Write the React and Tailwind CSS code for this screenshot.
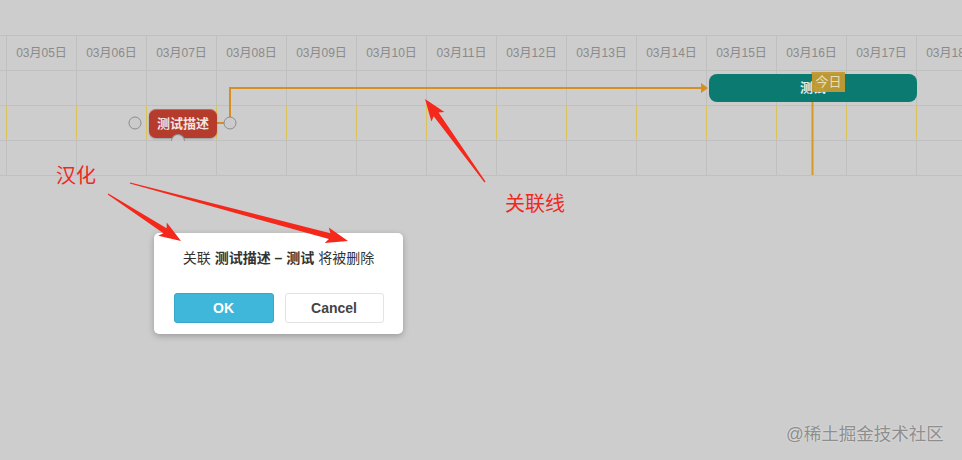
import React from 'react';

const dates = ['03月04日', '03月05日', '03月06日', '03月07日', '03月08日', '03月09日', '03月10日', '03月11日', '03月12日', '03月13日', '03月14日', '03月15日', '03月16日', '03月17日', '03月18日'];

// tapered screenshot-style annotation arrow
const arrowPoints = (x1, y1, x2, y2) => {
    const dx = x2 - x1;
    const dy = y2 - y1;
    const len = Math.hypot(dx, dy);
    const ux = dx / len;
    const uy = dy / len;
    const nx = -uy;
    const ny = ux;
    const headLen = 19;
    const headW = 8;
    const neckW = 3;
    const bx = x2 - ux * headLen;
    const by = y2 - uy * headLen;
    const pts = [
        [x1 + nx * 0.6, y1 + ny * 0.6],
        [bx + nx * neckW, by + ny * neckW],
        [bx - ux * 3 + nx * headW, by - uy * 3 + ny * headW],
        [x2, y2],
        [bx - ux * 3 - nx * headW, by - uy * 3 - ny * headW],
        [bx - nx * neckW, by - ny * neckW],
        [x1 - nx * 0.6, y1 - ny * 0.6],
    ];
    return pts.map(p => p[0].toFixed(1) + ',' + p[1].toFixed(1)).join(' ');
};

const GanttGrid = () => (
    <div className="pt-[35px] overflow-hidden">
        <div className="flex -ml-[63px] h-[35px] border-t border-[#c0c0c0]">
            {dates.map(d => (
                <div key={d} className="w-[70px] shrink-0 border-r border-[#c0c0c0] flex items-center justify-center text-[12px] text-[#8a8a8a]">
                    {d}
                </div>
            ))}
        </div>
        {[0, 1, 2].map(row => (
            <div key={row} className="flex -ml-[63px] h-[35px] border-t border-[#c0c0c0]">
                {dates.map(d => (
                    <div key={d} className={`w-[70px] shrink-0 border-r ${row === 1 ? 'border-[#dcc25a]' : 'border-[#c0c0c0]'}`} />
                ))}
            </div>
        ))}
        <div className="border-t border-[#c0c0c0]" />
    </div>
);

const GanttItems = () => (
    <>
        {/* link line */}
        <svg className="absolute left-0 top-0" width="962" height="180">
            <path d="M217 123 H224" stroke="#d38f1f" strokeWidth="2" fill="none" />
            <path d="M230 117 V88 H702" stroke="#d38f1f" strokeWidth="2" fill="none" />
            <polygon points="701,83 708,88 701,93" fill="#d38f1f" />
            <circle cx="135" cy="123" r="6" fill="#cbcbcb" stroke="#8c8c8c" strokeWidth="1" />
            <circle cx="230" cy="123" r="6" fill="#cbcbcb" stroke="#8c8c8c" strokeWidth="1" />
            <line x1="812.5" y1="72" x2="812.5" y2="175" stroke="#d59a22" strokeWidth="2" />
        </svg>

        {/* task bar 1 */}
        <div className="absolute left-[149px] top-[109px] w-[68px] h-[29px] rounded-[7px] bg-[#b53b2c] border-t border-[#c9675a] shadow-[0_1px_2px_rgba(0,0,0,0.25)] flex items-center justify-center text-[13px] font-bold text-[#f3e4e0]">
            测试描述
        </div>
        <div className="absolute left-[171px] top-[134px] w-[14px] h-[7px] rounded-t-full bg-[#c9c9c9] border border-b-0 border-[#8c8c8c]" />

        {/* task bar 2 */}
        <div className="absolute left-[709px] top-[74px] w-[208px] h-[28px] rounded-[8px] bg-[#0b7b72] flex items-center justify-center text-[13px] font-bold text-[#e6efee]">
            测试
        </div>

        {/* today marker */}
        <div className="absolute left-[812px] top-[72px] w-[33px] h-[20px] bg-[#c49a2f]/95 flex items-center justify-center text-[13px] text-[#e8dfb8]">
            今日
        </div>
    </>
);

const ConfirmDialog = () => (
    <div className="absolute left-[154px] top-[233px] w-[249px] h-[101px] bg-white rounded-[5px] shadow-[0_2px_6px_rgba(0,0,0,0.25)] flex flex-col items-center">
        <p className="mt-[16px] text-[14px] text-[#333] leading-[18px] whitespace-nowrap">
            关联 <span className="font-bold">测试描述 – 测试</span> 将被删除
        </p>
        <div className="mt-[26px] flex gap-[11px]">
            <button className="w-[100px] h-[30px] rounded-[3px] bg-[#3fb7da] border border-[#38a6c6] text-white font-bold text-[14px]">
                OK
            </button>
            <button className="w-[99px] h-[30px] rounded-[3px] bg-white border border-[#e3e3e3] text-[#444] font-bold text-[14px]">
                Cancel
            </button>
        </div>
    </div>
);

const Annotations = () => (
    <>
        <svg className="absolute left-0 top-0 pointer-events-none" width="962" height="460">
            <polygon points={arrowPoints(108, 194, 181, 241)} fill="#f5281c" />
            <polygon points={arrowPoints(130, 183, 348, 241)} fill="#f5281c" />
            <polygon points={arrowPoints(485, 182, 425, 99)} fill="#f5281c" />
        </svg>
        <div className="absolute left-[56px] top-[163px] text-[20px] leading-[26px] text-[#f0281e]">汉化</div>
        <div className="absolute left-[505px] top-[191px] text-[20px] leading-[26px] text-[#f0281e]">关联线</div>
        <div className="absolute left-[786px] top-[422px] text-[17.5px] leading-[24px] text-[#8e8e8e] [text-shadow:0_0_2px_#e8e8e8]">@稀土掘金技术社区</div>
    </>
);

const App = () => {
    return (
        <div className="relative w-[962px] h-[460px] overflow-hidden bg-[#cdcdcd] font-['Liberation_Sans','Noto_Sans_CJK_SC',sans-serif]">
            <GanttGrid />
            <GanttItems />
            <ConfirmDialog />
            <Annotations />
        </div>
    );
};

export default App;
